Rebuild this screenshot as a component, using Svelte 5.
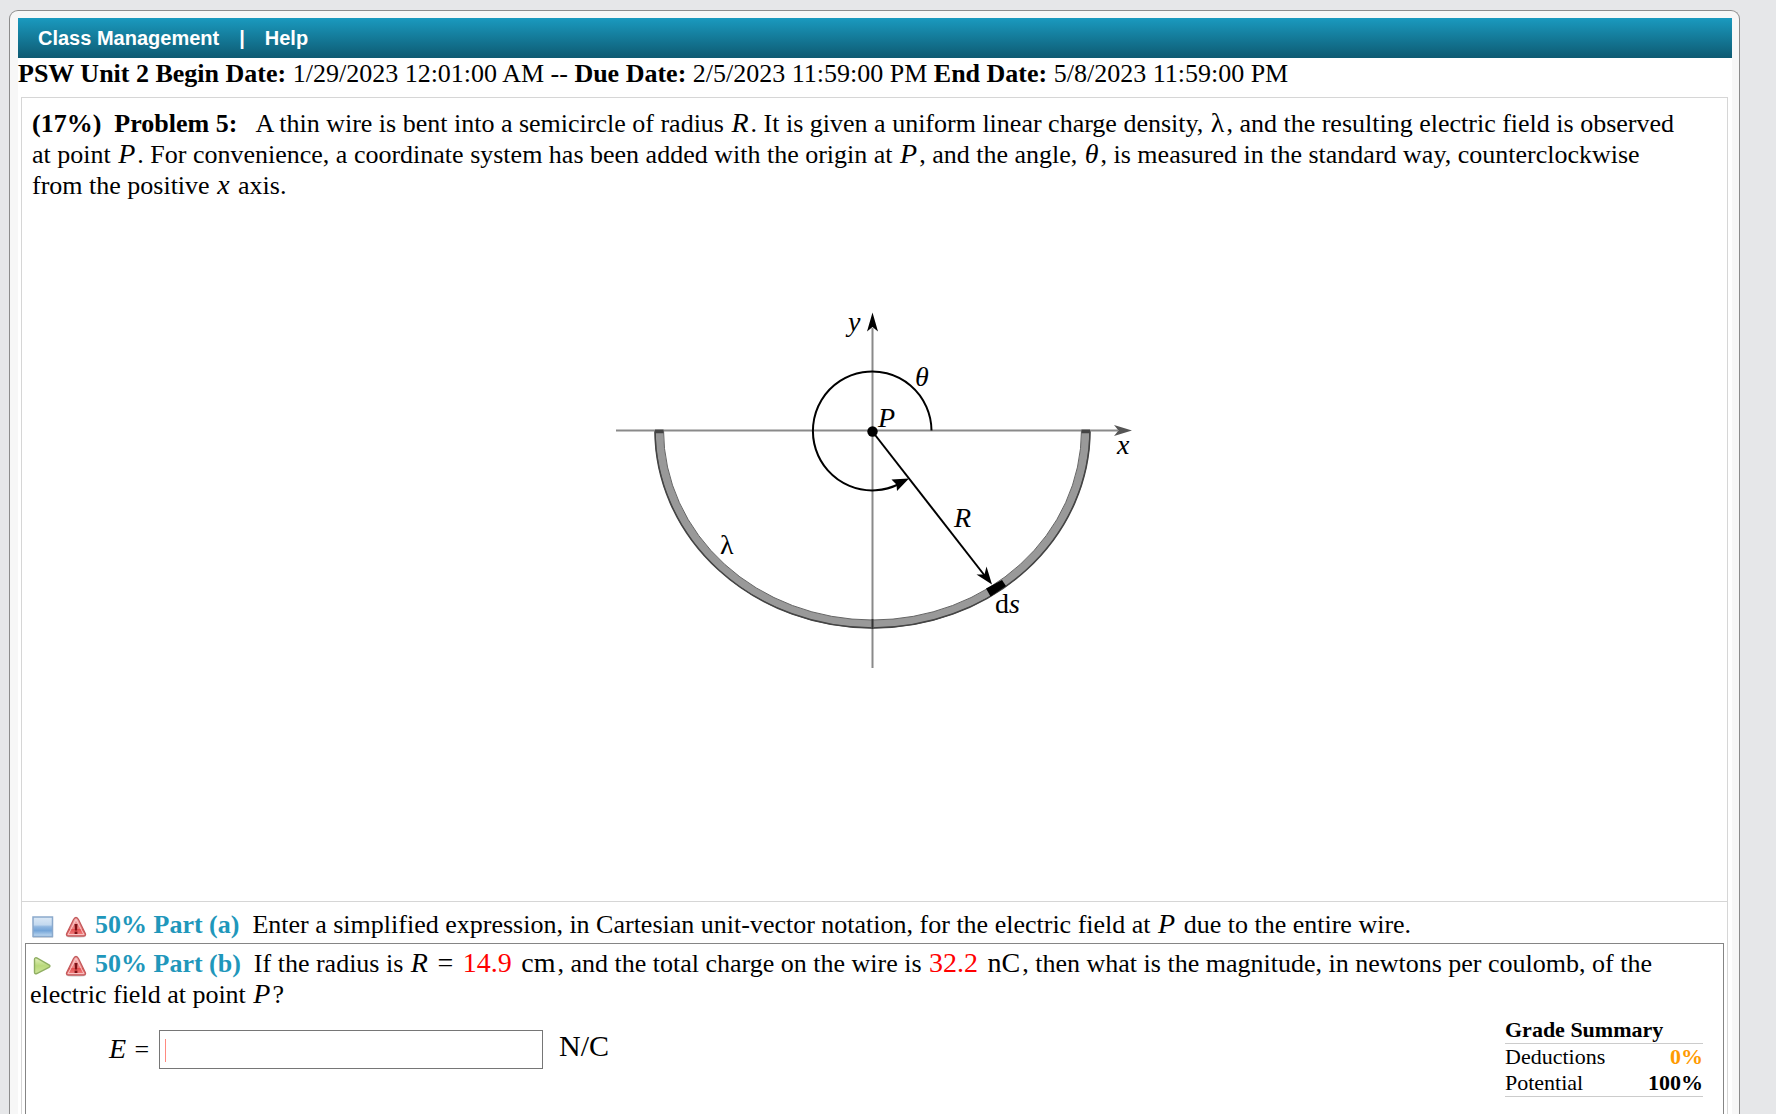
<script>
  let answer = $state('');
</script>

{#snippet warning()}
  <svg class="icon warn" viewBox="0 0 22 22" role="img" aria-label="Incomplete">
    <defs>
      <linearGradient id="warnFill" x1="0" y1="0" x2="0" y2="1">
        <stop offset="0" stop-color="#f3b3b3" />
        <stop offset="0.6" stop-color="#ee7b7b" />
        <stop offset="0.62" stop-color="#e24a4a" />
        <stop offset="1" stop-color="#f48c8c" />
      </linearGradient>
    </defs>
    <ellipse cx="11" cy="20.5" rx="10" ry="1.3" fill="#d9d9d9" />
    <path d="M11 1.5 C12.3 1.5 13 2.6 13.6 3.8 L20.3 17.4 C20.9 18.9 20.4 20 18.9 20 H3.1 C1.6 20 1.1 18.9 1.7 17.4 L8.4 3.8 C9 2.6 9.7 1.5 11 1.5 Z" fill="url(#warnFill)" stroke="#c2595b" stroke-width="1.3" />
    <path d="M11 3.4 L18.9 18.6 H3.1 Z" fill="none" stroke="#f9c9c9" stroke-width="1" />
    <path d="M9.5 8 H12.5 L12 14.4 H10 Z" fill="#7d1216" />
    <rect x="9.6" y="15.6" width="2.8" height="2.4" fill="#7d1216" />
  </svg>
{/snippet}

<div class="page">
  <main class="panel">
    <nav class="menu">
      <a href="#class">Class Management</a>
      <span>|</span>
      <a href="#help">Help</a>
    </nav>

    <p class="dates">
      <b>PSW Unit 2 Begin Date:</b> 1/29/2023 12:01:00 AM -- <b>Due Date:</b> 2/5/2023 11:59:00 PM
      <b>End Date:</b> 5/8/2023 11:59:00 PM
    </p>

    <section class="problem">
      <p class="statement">
        <b>(17%)&nbsp; Problem 5:</b> &nbsp; A thin wire is bent into a semicircle of radius <i>R</i>. It is given a
        uniform linear charge density, <span class="math">λ</span>, and the resulting electric field is observed at
        point <i>P</i>. For convenience, a coordinate system has been added with the origin at <i>P</i>, and the
        angle, <i>θ</i>, is measured in the standard way, counterclockwise from the positive <i>x</i> axis.
      </p>

      <div class="figure">
        <svg viewBox="595 300 560 380" width="560" height="380" role="img" aria-label="Semicircular wire below point P">
          <path d="M655 430 A217.5 198 0 0 0 1090 430 H1081.5 A209 190 0 0 1 663.5 430 Z" fill="#999" stroke="#666" stroke-width="1" />
          <path d="M655 430 A217.5 198 0 0 0 1090 430" fill="none" stroke="#444" stroke-width="1.6" />
          <path d="M616 430.5 H1118 M872.5 328 V668" stroke="#8a8a8a" stroke-width="2" />
          <path d="M655 431.5 H663.500 M1081.500 431.5 H1090" stroke="#444" stroke-width="3.500" />
          <path d="M872.5 619 V629" stroke="#333" stroke-width="2" />
          <path d="M1132 430.5 L1114 425 L1118.500 430.5 L1114 436 Z" fill="#555" />
          <path d="M872.5 312.500 L878 331.5 L872.5 327 L867 331.5 Z" />
          <path d="M931.500 430.5 A59.300 59.500 0 1 0 899 484" fill="none" stroke="#000" stroke-width="2" />
          <path d="M909 478.5 L891.500 479.500 L896.500 484.500 L897 491 Z" />
          <path d="M872 431 L985 576" stroke="#000" stroke-width="2" />
          <path d="M992 584.500 L986.500 566.500 L984.500 574.500 L976.500 574.500 Z" />
          <circle cx="872.5" cy="431.5" r="5.200" />
          <path d="M986 588.500 L1002 580 L1006 586 L990.500 596.500 Z" />
          <g class="labels">
            <text x="848" y="331">y</text>
            <text x="915" y="386">θ</text>
            <text x="878" y="427">P</text>
            <text x="1117" y="454">x</text>
            <text x="954" y="527">R</text>
            <text x="720" y="554" class="upright">λ</text>
            <text x="995" y="613"><tspan class="upright">d</tspan>s</text>
          </g>
        </svg>
      </div>

      <div class="part">
        <svg class="icon state" viewBox="0 0 22 22" role="img" aria-label="Part a">
          <defs>
            <linearGradient id="squareFill" x1="0" y1="0" x2="0" y2="1">
              <stop offset="0" stop-color="#dce9f6" />
              <stop offset="0.4" stop-color="#c3d9ef" />
              <stop offset="0.5" stop-color="#8fb6e0" />
              <stop offset="0.7" stop-color="#74a5d8" />
              <stop offset="1" stop-color="#c4dcf2" />
            </linearGradient>
          </defs>
          <path d="M1 21.500 H21" stroke="#ddd" />
          <rect x="1" y="1" width="19.500" height="19.500" fill="url(#squareFill)" stroke="#8aa9cc" stroke-width="1.500" />
        </svg>
        {@render warning()}
        <b class="tag">50% Part (a)</b>&nbsp; Enter a simplified expression, in Cartesian unit-vector notation, for the
        electric field at <i>P</i> due to the entire wire.
      </div>

      <div class="active">
        <div class="question">
          <svg class="icon state" viewBox="0 0 22 22" role="img" aria-label="Part b, current">
            <defs>
              <linearGradient id="playFill" x1="0" y1="0" x2="0" y2="1">
                <stop offset="0" stop-color="#e3efbd" />
                <stop offset="0.5" stop-color="#b9d97b" />
                <stop offset="1" stop-color="#cfe59a" />
              </linearGradient>
            </defs>
            <path d="M2.500 4.500 C2.500 3 3.500 2.500 4.800 3 L17 9.800 C18.300 10.600 18.300 11.600 17 12.300 L4.800 18.500 C3.500 19 2.500 18.500 2.500 17.200 Z" fill="url(#playFill)" stroke="#8fae62" stroke-width="1.400" />
          </svg>
          {@render warning()}
          <b class="tag">50% Part (b)</b>&nbsp; If the radius is <i>R</i>
          <span class="math">=</span> <span class="math value">14.9</span> <span class="math">cm</span>, and the total
          charge on the wire is <span class="math value">32.2</span> <span class="math">nC</span>, then what is the
          magnitude, in newtons per coulomb, of the electric field at point <i>P</i>?
        </div>

        <div class="work">
          <div class="answer">
            <label for="field"><i>E</i> =</label>
            <input id="field" type="text" bind:value={answer} />
            <span class="caret"></span>
            <span class="unit">N/C</span>
          </div>
          <table class="grades">
            <thead>
              <tr><th colspan="2">Grade Summary</th></tr>
            </thead>
            <tbody>
              <tr><td>Deductions</td><td class="score lost">0%</td></tr>
              <tr><td>Potential</td><td class="score">100%</td></tr>
            </tbody>
          </table>
        </div>
      </div>
    </section>
  </main>
</div>

<style>
  :global(body) {
    background: #e6e7e9;
  }
  .page {
    box-sizing: border-box;
    display: flex;
    min-height: 100vh;
    padding: 10px 36px 0 9px;
    font: 26px/31px 'Liberation Serif', 'Times New Roman', serif;
    color: #000;
  }
  .panel {
    flex: 1;
    display: flex;
    flex-direction: column;
    min-width: 0;
    padding: 7px 7px 0 8px;
    border: 1px solid #8c8c8c;
    border-bottom: 0;
    border-radius: 9px 9px 0 0;
    background: linear-gradient(#fff, #fff) content-box, #f7f7f7;
  }
  .menu {
    display: flex;
    gap: 20px;
    padding: 0 20px;
    background: linear-gradient(#1a9abf, #0e5a72);
    color: #fff;
    font: bold 20px/40px 'Liberation Sans', Arial, sans-serif;
  }
  .menu a {
    color: inherit;
    text-decoration: none;
  }
  p {
    margin: 0;
  }
  .dates {
    padding-bottom: 8px;
  }
  .problem {
    flex: 1;
    display: flex;
    flex-direction: column;
    margin: 0 4px 0 3px;
    border: 1px solid #d6d6d6;
    border-bottom: 0;
  }
  .statement {
    padding: 10px 36px 0 10px;
  }
  i,
  .math {
    margin: 0 2px 0 1px;
    font-size: 28px;
    line-height: 1px;
  }
  .figure {
    display: flex;
    justify-content: center;
    padding: 99px 0 221px;
    border-bottom: 1px solid #d6d6d6;
  }
  .labels {
    font-size: 28px;
    font-style: italic;
  }
  .upright {
    font-style: normal;
  }
  .part {
    padding: 7px 10px 3px;
  }
  .icon {
    width: 22px;
    height: 22px;
    vertical-align: -5px;
  }
  .warn {
    margin: 0 2px 0 4px;
  }
  .tag {
    color: #1f97bb;
  }
  .active {
    flex: 1;
    margin: 0 3px;
    border: 1px solid #858585;
    border-bottom: 0;
  }
  .question {
    padding: 4px 20px 0 4px;
  }
  .question .state {
    margin-left: 2px;
  }
  .value {
    color: #f00;
  }
  .work {
    display: flex;
    justify-content: space-between;
    align-items: flex-start;
    padding: 7px 20px 0 82px;
  }
  .answer {
    position: relative;
    display: flex;
    align-items: center;
    padding-top: 13px;
  }
  .answer label {
    width: 51px;
  }
  .answer input {
    box-sizing: border-box;
    width: 384px;
    height: 39px;
    padding: 0 6px;
    border: 1px solid #767676;
    border-radius: 0;
    background: #fff;
    font: inherit;
    outline: 0;
  }
  .caret {
    position: absolute;
    left: 57px;
    top: 22px;
    width: 1px;
    height: 23px;
    background: #ff8a80;
  }
  .unit {
    align-self: flex-start;
    margin-left: 16px;
    font-size: 30px;
  }
  .grades {
    width: 198px;
    border-collapse: collapse;
    border-bottom: 1px solid #ccc;
    font-size: 22px;
    line-height: 26px;
  }
  .grades th,
  .grades td {
    padding: 0;
    text-align: left;
  }
  .grades th {
    border-bottom: 1px solid #ccc;
  }
  .grades .score {
    text-align: right;
    font-weight: bold;
  }
  .grades .lost {
    color: #ff9a00;
  }
</style>
